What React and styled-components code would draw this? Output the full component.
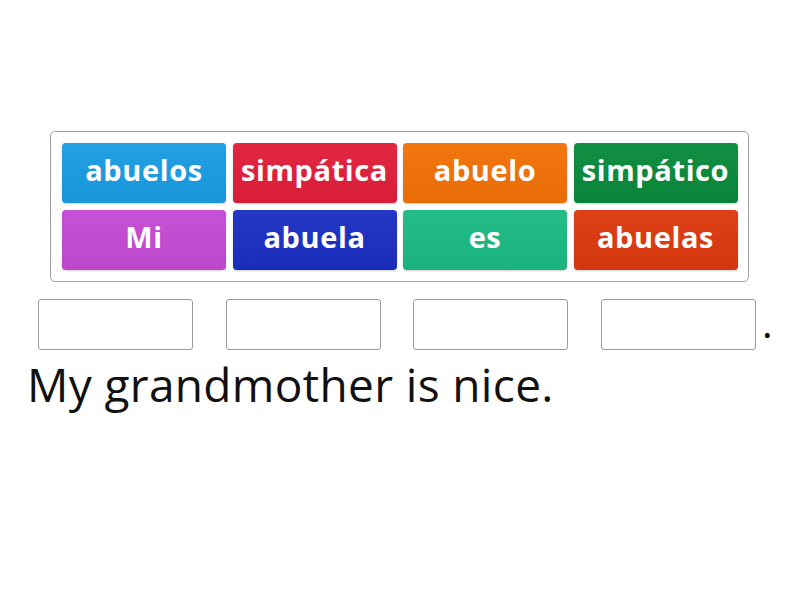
import React from 'react';
import styled, { createGlobalStyle } from 'styled-components';

const GlobalStyle = createGlobalStyle`
    html, body {
        margin: 0;
        padding: 0;
        background: #ffffff;
        font-family: 'Open Sans', 'Noto Sans', sans-serif;
    }
`;

const Page = styled.div`
    width: 800px;
    height: 600px;
    padding-top: 131px;
    box-sizing: border-box;
`;

const Bank = styled.div`
    margin-left: 50px;
    width: 699px;
    box-sizing: border-box;
    padding: 11px;
    border: 1px solid #a0a0a0;
    border-radius: 5px;
    display: grid;
    grid-template-columns: repeat(4, 164px);
    grid-auto-rows: 60px;
    column-gap: 6.5px;
    row-gap: 7px;
`;

const Tile = styled.div`
    display: flex;
    align-items: center;
    justify-content: center;
    padding-bottom: 7px;
    box-sizing: border-box;
    border-radius: 4px;
    background: ${(p) => p.$color};
    background-image: linear-gradient(rgba(255, 255, 255, 0.04), rgba(0, 0, 0, 0.04));
    box-shadow: 0 1px 2px rgba(0, 0, 0, 0.2);
    color: #ffffff;
    font-size: 29px;
    font-weight: 700;
    letter-spacing: 0.6px;
`;

const Answers = styled.div`
    display: flex;
    align-items: flex-end;
    margin-top: 17px;
    padding-left: 38px;
    gap: 32.5px;
`;

const Slot = styled.div`
    width: 155px;
    height: 51px;
    box-sizing: border-box;
    border: 1px solid #9a9a9a;
    border-radius: 3px;
`;

const Period = styled.span`
    font-size: 40px;
    line-height: 40px;
    margin-left: -26px;
    margin-bottom: 7px;
    color: #000;
`;

const Sentence = styled.div`
    margin-left: 27px;
    margin-top: 6px;
    font-size: 46px;
    line-height: 56px;
    letter-spacing: 0.35px;
    color: #111;
`;

const tiles = [
    ['abuelos', '#1a9be3'],
    ['simpática', '#e01e3a'],
    ['abuelo', '#f27106'],
    ['simpático', '#098a3c'],
    ['Mi', '#c54ad3'],
    ['abuela', '#1b2fc2'],
    ['es', '#1bb982'],
    ['abuelas', '#dc380e'],
];

export default function App() {
    return (
        <Page>
            <GlobalStyle />
            <Bank>
                {tiles.map(([word, color]) => (
                    <Tile key={word} $color={color}>
                        {word}
                    </Tile>
                ))}
            </Bank>
            <Answers>
                <Slot />
                <Slot />
                <Slot />
                <Slot />
                <Period>.</Period>
            </Answers>
            <Sentence>My grandmother is nice.</Sentence>
        </Page>
    );
}
